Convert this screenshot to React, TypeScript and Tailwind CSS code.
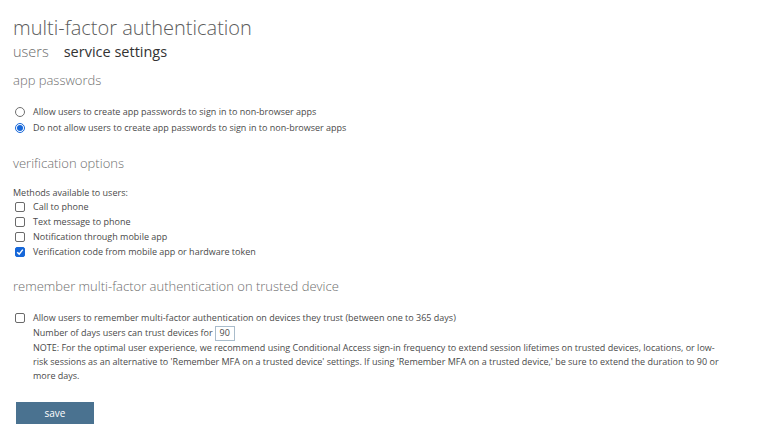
import React from "react";

const bodyText = "text-[9px] text-[#4a4a4a]";
const sectionClass = "text-[13px] leading-[20px] font-light text-[#6e6e6e]";

const Radio = ({ checked, text }: { checked: boolean; text: string }) => {
  return (
    <div className="flex items-center h-[16px]">
      <span
        className={
          "w-[10px] h-[10px] rounded-full border flex items-center justify-center ml-[2px] mr-[8px] " +
          (checked ? "border-[#1667d9]" : "border-[#707070]")
        }
      >
        {checked && <span className="w-[6px] h-[6px] rounded-full bg-[#1667d9]" />}
      </span>
      <span className={bodyText}>{text}</span>
    </div>
  );
};

const Check = ({ checked, text }: { checked: boolean; text: string }) => {
  return (
    <div className="flex items-center h-[15px]">
      <span
        className={
          "w-[10px] h-[10px] rounded-[2px] border flex items-center justify-center ml-[2px] mr-[8px] shrink-0 " +
          (checked ? "border-[#1667d9] bg-[#1667d9]" : "border-[#6a6a6a] bg-white")
        }
      >
        {checked && (
          <svg width="8" height="8" viewBox="0 0 8 8">
            <path d="M1.2 4.2 L3.2 6.1 L6.8 1.6" fill="none" stroke="white" strokeWidth="1.4" />
          </svg>
        )}
      </span>
      <span className={bodyText}>{text}</span>
    </div>
  );
};

export default function App() {
  return (
    <div className="min-h-screen bg-white pl-[13px] pt-[14px] font-['Open_Sans',sans-serif]">
      <h1 className="text-[20px] leading-[28px] font-light text-[#5c5c5c]">
        multi-factor authentication
      </h1>
      <div className="flex gap-[15px] text-[14.5px] leading-[18px] mt-[1px]">
        <span className="text-[#6a6a6a] font-light">users</span>
        <span className="text-[#333333]">service settings</span>
      </div>

      <div className={sectionClass + " mt-[9px]"}>app passwords</div>
      <div className="mt-[14px]">
        <Radio checked={false} text="Allow users to create app passwords to sign in to non-browser apps" />
        <Radio checked={true} text="Do not allow users to create app passwords to sign in to non-browser apps" />
      </div>

      <div className={sectionClass + " mt-[17px]"}>verification options</div>
      <div className={bodyText + " leading-[13px] mt-[13px]"}>Methods available to users:</div>
      <div>
        <Check checked={false} text="Call to phone" />
        <Check checked={false} text="Text message to phone" />
        <Check checked={false} text="Notification through mobile app" />
        <Check checked={true} text="Verification code from mobile app or hardware token" />
      </div>

      <div className={sectionClass + " mt-[17px]"}>
        remember multi-factor authentication on trusted device
      </div>
      <div className="mt-[14px]">
        <Check
          checked={false}
          text="Allow users to remember multi-factor authentication on devices they trust (between one to 365 days)"
        />
        <div className="pl-[20px]">
          <div className={bodyText + " flex items-center h-[16px]"}>
            Number of days users can trust devices for
            <span className="ml-[2px] w-[20px] h-[15px] border border-[#a9bccb] flex items-center justify-center">
              90
            </span>
          </div>
          <p className={bodyText + " leading-[14px] max-w-[688px]"}>
            NOTE: For the optimal user experience, we recommend using Conditional Access sign-in frequency to
            extend session lifetimes on trusted devices, locations, or low-risk sessions as an alternative to
            'Remember MFA on a trusted device' settings. If using 'Remember MFA on a trusted device,' be sure to
            extend the duration to 90 or more days.
          </p>
        </div>
      </div>

      <button className="mt-[19px] ml-[3px] w-[78px] h-[22px] bg-[#4a7290] text-white text-[10px]">
        save
      </button>
    </div>
  );
}
